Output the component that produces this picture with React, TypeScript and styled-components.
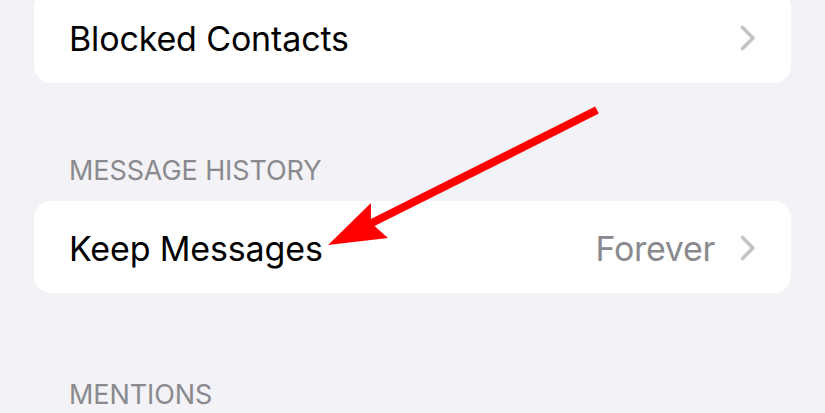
import React from 'react';
import styled, { createGlobalStyle } from 'styled-components';

const GlobalStyle = createGlobalStyle`
  html, body {
    margin: 0;
    padding: 0;
    background: #f2f2f7;
    overflow: hidden;
  }
`;

const Chevron = () => (
  <ChevronSvg viewBox="0 0 16 26" width="16" height="26">
    <polyline points="2.5,2.5 13,13 2.5,23.5" />
  </ChevronSvg>
);

const App = () => {
  return (
    <>
      <GlobalStyle />
      <Page>
        <Group $offset={-9}>
          <Row>
            <Label>Blocked Contacts</Label>
            <Trailing>
              <Chevron />
            </Trailing>
          </Row>
        </Group>

        <SectionHeader $top={71}>Message History</SectionHeader>
        <Group $offset={13}>
          <Row>
            <Label>Keep Messages</Label>
            <Trailing>
              <Value>Forever</Value>
              <Chevron />
            </Trailing>
          </Row>
        </Group>

        <SectionHeader $top={85}>Mentions</SectionHeader>

        {/* annotation arrow laid over the screenshot */}
        <Annotation viewBox="0 0 825 413" width="825" height="413">
          <polygon points="328,245 371,203 370.9,218.9 595.2,106.4 598.8,113.6 374.5,226.1 388,238" />
        </Annotation>
      </Page>
    </>
  );
};

export default App;

const Page = styled.div`
  position: relative;
  height: 413px;
  padding: 0 34px;
  overflow: hidden;
  font-family: Inter, 'Noto Sans', sans-serif;
`;

const Group = styled.div<{ $offset: number }>`
  margin-top: ${(p) => p.$offset}px;
  background: #ffffff;
  border-radius: 17px;
  overflow: hidden;
`;

const Row = styled.div`
  display: flex;
  align-items: center;
  justify-content: space-between;
  height: 92px;
  padding: 3px 35px 0 35px;
  box-sizing: border-box;
`;

const Label = styled.span`
  font-size: 34px;
  color: #000000;
  letter-spacing: -0.15px;
`;

const Trailing = styled.div`
  display: flex;
  align-items: center;
  gap: 25px;
`;

const Value = styled.span`
  font-size: 34px;
  color: #8a8a8e;
  letter-spacing: -0.3px;
`;

const ChevronSvg = styled.svg`
  display: block;
  margin-top: -2px;

  polyline {
    fill: none;
    stroke: #c4c4c7;
    stroke-width: 3.6;
    stroke-linecap: round;
    stroke-linejoin: round;
  }
`;

const SectionHeader = styled.div<{ $top: number }>`
  margin-top: ${(p) => p.$top}px;
  padding-left: 35px;
  font-size: 27px;
  line-height: 34px;
  color: #8a8a8e;
  text-transform: uppercase;
  letter-spacing: -0.1px;
`;

const Annotation = styled.svg`
  position: absolute;
  top: 0;
  left: 0;
  pointer-events: none;

  polygon {
    fill: #ff0000;
  }
`;
